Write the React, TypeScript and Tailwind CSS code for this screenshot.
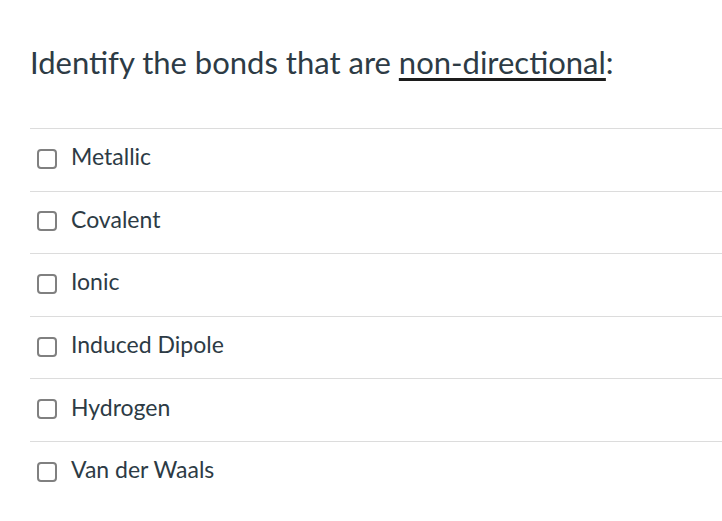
import React from 'react';

const options = ['Metallic', 'Covalent', 'Ionic', 'Induced Dipole', 'Hydrogen', 'Van der Waals'];

export default function App() {
  return (
    <div className="bg-white w-[722px] h-[521px] pl-[30px] text-[#2d3b45]" style={{ fontFamily: 'Lato, "Open Sans", sans-serif' }}>
      <div className="pt-[38px] pb-[42px] text-[31px] leading-[48px] text-[#2d3b45]">
        Identify the bonds that are <span className="underline decoration-[2.5px] decoration-[#1c1c1c] underline-offset-[4px]">non-directional</span>:
      </div>
      <div>
        {options.map((opt) => (
          <label key={opt} className="flex items-center h-[62.6px] border-t border-[#dcdcdc] pl-[7px]">
            <span className="w-[20px] h-[20px] -mt-[2px] rounded-[4px] border-2 border-[#808080] shrink-0" />
            <span className="ml-[14px] -mt-[6px] text-[23px] leading-none">{opt}</span>
          </label>
        ))}
      </div>
    </div>
  );
}
